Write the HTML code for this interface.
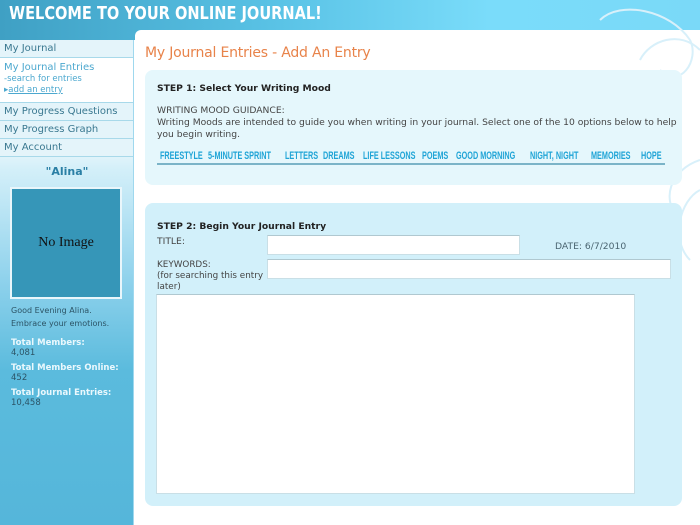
<!DOCTYPE html>
<html><head><meta charset="utf-8"><style>
*{margin:0;padding:0;box-sizing:border-box}
body{width:700px;height:525px;overflow:hidden;position:relative;background:#fff;font-family:"DejaVu Sans","Liberation Sans",sans-serif;font-size:9.2px;color:#444}
#hdr{position:absolute;left:0;top:0;width:700px;height:40px;background:linear-gradient(90deg,#3fa0c4 0%,#5ac3e6 40%,#7adcfa 70%,#7ad9f8 100%)}
#hdr h1{position:absolute;left:9px;top:3px;font-family:"DejaVu Sans","Liberation Sans",sans-serif;font-weight:bold;font-size:18px;color:#fff;white-space:nowrap;transform:scaleX(0.81);transform-origin:left}
#side{position:absolute;left:0;top:40px;width:134px;height:485px;background:linear-gradient(180deg,#e8f6fb 0px,#dff3fa 118px,#d3eff9 130px,#8fd2ec 240px,#5bbbdd 330px,#55b6da 485px);border-right:1px solid #9fd8ee}
.m{height:18px;border-bottom:1px solid #a8d9ea;font-size:10px;color:#3a7890;padding:3px 4px;background:#e4f4fa}
.m2{background:#fff;height:45px;padding:3px 4px;font-size:10px;color:#4ca8cf;border-bottom:1px solid #a8d9ea;line-height:13px}
.m2 div{font-size:8.5px;line-height:11px}
#main{position:absolute;left:135px;top:30px;width:565px;height:495px;background:#fff;border-radius:6px 0 0 0}
.t{position:absolute;left:145px;top:45px;font-size:14px;color:#e8834a;font-family:"DejaVu Sans",sans-serif;letter-spacing:-0.2px}
.box{position:absolute;left:145px;border-radius:8px}
.b{font-weight:bold;color:#222;font-size:9.2px}
.moods{position:absolute;left:157px;top:151px;width:508px;border-bottom:2px solid #7bb4c8;height:14px}
.moods span{position:absolute;top:-1px;font-family:"Liberation Sans",sans-serif;font-weight:bold;font-size:11px;color:#1fa4d6;white-space:nowrap;transform:scaleX(0.66);transform-origin:left}
input,.ta{position:absolute;background:#fff;border:1px solid #c9dfe6;border-top-color:#b0c8d0}
</style></head><body>
<div id="hdr"><h1>WELCOME TO YOUR ONLINE JOURNAL!</h1></div>
<div id="side">
<div class="m">My Journal</div>
<div class="m2">My Journal Entries<div style="color:#4ca8cf">-search for entries</div><div>▸<u>add an entry</u></div></div>
<div class="m">My Progress Questions</div>
<div class="m">My Progress Graph</div>
<div class="m">My Account</div>
<div style="position:absolute;left:0;top:125px;width:134px;text-align:center;font-weight:bold;font-size:11px;color:#2a7fa5">"Alina"</div>
<div style="position:absolute;left:10px;top:147px;width:112px;height:112px;border:2px solid #e9f6fb;background:#3696b8;font-family:'Liberation Serif',serif;font-size:14px;color:#111;text-align:center;line-height:108px">No Image</div>
<div style="position:absolute;left:11px;top:264px;color:#2c5466;font-size:8px;line-height:13px">Good Evening Alina.<br>Embrace your emotions.</div>
<div style="position:absolute;left:11px;top:298px;font-size:8.5px;line-height:10px;color:#2c5466"><b style="color:#eaf8fd">Total Members:</b><br>4,081<br><div style="height:5px"></div><b style="color:#eaf8fd">Total Members Online:</b><br>452<br><div style="height:5px"></div><b style="color:#eaf8fd">Total Journal Entries:</b><br>10,458</div>
</div>
<div id="main"></div>
<svg style="position:absolute;left:560px;top:0" width="140" height="280" viewBox="0 0 140 280" fill="none" stroke="#d8f0fa" stroke-width="2"><path d="M40 20 C60 0 110 10 130 40 C140 60 120 90 100 70"/><path d="M80 60 C90 40 120 30 140 50"/><path d="M120 220 C100 200 110 170 140 160"/><path d="M130 260 C110 240 120 200 140 190"/></svg>
<div class="t">My Journal Entries - Add An Entry</div>
<div class="box" style="top:70px;width:537px;height:115px;background:#e5f7fc"></div>
<div style="position:absolute;left:157px;top:83px" class="b">STEP 1: Select Your Writing Mood</div>
<div style="position:absolute;left:157px;top:105px;line-height:12px;width:525px">WRITING MOOD GUIDANCE:<br>Writing Moods are intended to guide you when writing in your journal. Select one of the 10 options below to help you begin writing.</div>
<div class="moods">
<span style="left:3px">FREESTYLE</span>
<span style="left:51px">5-MINUTE SPRINT</span>
<span style="left:128px">LETTERS</span>
<span style="left:166px">DREAMS</span>
<span style="left:206px">LIFE LESSONS</span>
<span style="left:265px">POEMS</span>
<span style="left:299px">GOOD MORNING</span>
<span style="left:373px">NIGHT, NIGHT</span>
<span style="left:434px">MEMORIES</span>
<span style="left:484px">HOPE</span>
</div>
<div class="box" style="top:203px;width:537px;height:303px;background:#d2f0fa"></div>
<div style="position:absolute;left:157px;top:221px" class="b">STEP 2: Begin Your Journal Entry</div>
<div style="position:absolute;left:157px;top:236px">TITLE:</div>
<input style="left:267px;top:235px;width:253px;height:20px">
<div style="position:absolute;left:555px;top:241px;color:#4a6470">DATE: 6/7/2010</div>
<div style="position:absolute;left:157px;top:260px;line-height:11px;font-size:8.8px">KEYWORDS:<br>(for searching this entry<br>later)</div>
<input style="left:267px;top:259px;width:404px;height:20px">
<div class="ta" style="left:156px;top:294px;width:479px;height:200px"></div>
</body></html>
